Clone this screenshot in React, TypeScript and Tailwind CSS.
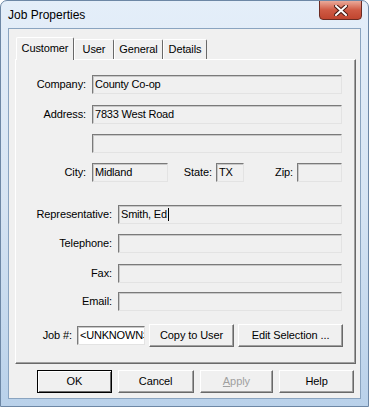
import React from "react";

const font = { fontFamily: '"Liberation Sans", Arial, sans-serif' };

function Field({ w, value, white, caret }: { w: string; value?: string; white?: boolean; caret?: boolean }) {
  return (
    <div
      className={`${w} h-[19px] flex items-center pl-[2px] text-[11px] tracking-[-0.2px] text-black overflow-hidden whitespace-nowrap border border-t-[#7a7a7a] border-l-[#7a7a7a] border-b-[#e3e3e3] border-r-[#e3e3e3] shadow-[inset_1px_1px_0_#c8c8c8] ${white ? "bg-white" : "bg-[#f0f0f0]"}`}
    >
      {value}
      {caret && <span className="inline-block w-px h-[13px] bg-black ml-[1px]" />}
    </div>
  );
}

function Btn({ w, label, primary, disabled }: { w: string; label: React.ReactNode; primary?: boolean; disabled?: boolean }) {
  return (
    <div
      className={`${w} h-[23px] flex items-center justify-center text-[11px] tracking-[-0.1px] bg-[#f0f0f0] ${
        primary ? "border border-black shadow-[inset_1px_1px_0_#fff,inset_-1px_-1px_0_#696969]" : "border border-t-white border-l-white border-b-[#696969] border-r-[#696969] shadow-[inset_-1px_-1px_0_#a0a0a0]"
      } ${disabled ? "text-[#a0a0a0]" : "text-black"}`}
    >
      {label}
    </div>
  );
}

function Tab({ w, label, active }: { w: string; label: string; active?: boolean }) {
  return (
    <div
      className={`${w} flex items-center justify-center text-[11px] tracking-[-0.1px] text-black bg-[#f0f0f0] border-l border-l-white border-t border-t-white border-r border-r-[#696969] rounded-t-[2px] ${
        active ? "h-[23px] -mb-px relative z-10 pb-[2px]" : "h-[20px]"
      }`}
    >
      {label}
    </div>
  );
}

function Row({ labelW, label, children, mt }: { labelW: string; label: string; children: React.ReactNode; mt: string }) {
  return (
    <div className={`flex items-center ${mt}`}>
      <div className={`${labelW} text-right text-[11px] tracking-[-0.1px] text-black pr-[6px]`}>{label}</div>
      {children}
    </div>
  );
}

export default function App() {
  return (
    <div
      className="w-[369px] h-[407px] relative overflow-hidden rounded-t-[7px] border border-[#6d87a5] bg-gradient-to-b from-[#e4eef9] via-[#d6e4f3] to-[#b9d1ea]"
      style={font}
    >
      {/* Title bar */}
      <div className="h-[27px] flex items-center pl-[7px] text-[12px] text-black">Job Properties</div>
      <div className="absolute top-[-1px] right-[6px] w-[43px] h-[20px] rounded-b-[4px] border border-[#6b2b22] bg-gradient-to-b from-[#e9a99a] via-[#cf5a44] to-[#c0452f] flex items-center justify-center">
        <svg width="14" height="11" viewBox="0 0 14 11">
          <path d="M2 1 L12 10 M12 1 L2 10" stroke="#4a1a12" strokeWidth="4" strokeLinecap="square" />
          <path d="M2 1 L12 10 M12 1 L2 10" stroke="#ffffff" strokeWidth="2" strokeLinecap="square" />
        </svg>
      </div>

      {/* Client area */}
      <div className="mx-[7px] h-[371px] bg-[#f0f0f0] border border-[#8aa4c0] pt-[6px] px-[6px]">
        {/* Tabs */}
        <div className="flex items-end h-[24px] pl-[1px]">
          <Tab w="w-[58px]" label="Customer" active />
          <Tab w="w-[40px]" label="User" />
          <Tab w="w-[49px]" label="General" />
          <Tab w="w-[44px]" label="Details" />
        </div>
        {/* Panel */}
        <div className="w-[341px] h-[305px] border border-t-white border-l-white border-b-[#696969] border-r-[#696969] shadow-[inset_-1px_-1px_0_#a0a0a0]">
          <Row labelW="w-[76px]" label="Company:" mt="mt-[15px]">
            <Field w="w-[250px]" value="County Co-op" />
          </Row>
          <Row labelW="w-[76px]" label="Address:" mt="mt-[11px]">
            <Field w="w-[250px]" value="7833 West Road" />
          </Row>
          <Row labelW="w-[76px]" label="" mt="mt-[10px]">
            <Field w="w-[250px]" />
          </Row>
          <Row labelW="w-[76px]" label="City:" mt="mt-[10px]">
            <Field w="w-[76px]" value="Midland" />
            <div className="w-[48px] text-right text-[11px] tracking-[-0.1px] text-black pr-[4px]">State:</div>
            <Field w="w-[28px]" value="TX" />
            <div className="w-[53px] text-right text-[11px] tracking-[-0.1px] text-black pr-[4px]">Zip:</div>
            <Field w="w-[45px]" />
          </Row>

          <Row labelW="w-[102px]" label="Representative:" mt="mt-[23px]">
            <Field w="w-[224px]" value="Smith, Ed" caret />
          </Row>
          <Row labelW="w-[102px]" label="Telephone:" mt="mt-[10px]">
            <Field w="w-[224px]" />
          </Row>
          <Row labelW="w-[102px]" label="Fax:" mt="mt-[11px]">
            <Field w="w-[224px]" />
          </Row>
          <Row labelW="w-[102px]" label="Email:" mt="mt-[9px]">
            <Field w="w-[224px]" />
          </Row>

          <div className="flex items-center mt-[13px]">
            <div className="w-[61px] text-right text-[11px] tracking-[-0.1px] text-black pr-[5px]">Job #:</div>
            <Field w="w-[68px]" value="<UNKNOWN>" white />
            <div className="w-[4px]" />
            <Btn w="w-[85px]" label="Copy to User" />
            <div className="w-[4px]" />
            <Btn w="w-[105px]" label="Edit Selection ..." />
          </div>
        </div>

        {/* Bottom buttons */}
        <div className="flex gap-[6px] mt-[6px] pl-[22px]">
          <Btn w="w-[75px]" label="OK" primary />
          <Btn w="w-[76px]" label="Cancel" />
          <Btn w="w-[74px]" label={<span><span className="underline">A</span>pply</span>} disabled />
          <Btn w="w-[75px]" label="Help" />
        </div>
      </div>
    </div>
  );
}
